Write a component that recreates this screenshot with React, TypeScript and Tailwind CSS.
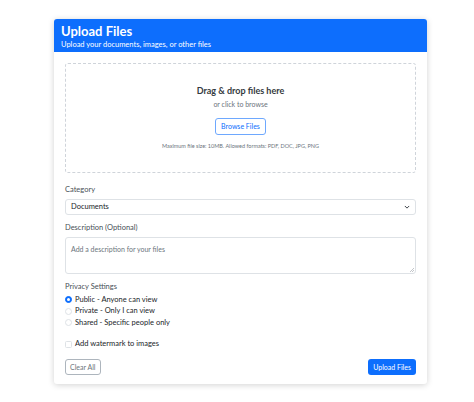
import { useState } from 'react';

const privacyOptions = [
  { id: 'public', label: 'Public - Anyone can view' },
  { id: 'private', label: 'Private - Only I can view' },
  { id: 'shared', label: 'Shared - Specific people only' },
];

export default function App() {
  const [privacy, setPrivacy] = useState('public');

  return (
    <div className="w-[474px] h-[402px] bg-white font-['Lato',sans-serif] text-[#212529]">
      <div className="absolute left-[54px] top-[19px] w-[373px] rounded-[3px] bg-white shadow-[0_1px_6px_rgba(0,0,0,0.18)]">
        {/* header */}
        <div className="h-[33px] rounded-t-[3px] bg-[#0d6efd] px-[7px] pt-[4px] text-white">
          <h1 className="text-[13px] font-bold leading-[17px]">Upload Files</h1>
          <p className="text-[7.5px] leading-[10px]">Upload your documents, images, or other files</p>
        </div>

        {/* body */}
        <div className="px-[11px] pt-[11px] pb-[9px]">
          <div className="flex h-[110px] flex-col items-center rounded-[3px] border border-dashed border-[#cfd4da] pt-[20px]">
            <p className="text-[9px] font-bold leading-[13px] text-[#343a40]">Drag &amp; drop files here</p>
            <p className="mt-[2px] text-[7px] leading-[10px] text-[#6c757d]">or click to browse</p>
            <button className="mt-[9px] h-[17px] rounded-[3px] border border-[#6ea8fe] px-[5px] text-[7px] leading-[15px] text-[#0d6efd]">
              Browse Files
            </button>
            <p className="mt-[7px] text-[5.5px] leading-[8px] text-[#6c757d]">
              Maximum file size: 10MB. Allowed formats: PDF, DOC, JPG, PNG
            </p>
          </div>

          <label className="mt-[12px] block text-[7.5px] leading-[10px] text-[#495057]">Category</label>
          <div className="mt-[4px] flex h-[16px] items-center justify-between rounded-[3px] border border-[#dee2e6] px-[5px]">
            <span className="text-[7.5px] leading-[10px] text-[#212529]">Documents</span>
            <svg width="6" height="6" viewBox="0 0 16 16" fill="none" stroke="#343a40" strokeWidth="2.5" strokeLinecap="round" strokeLinejoin="round">
              <path d="M3 6l5 5 5-5" />
            </svg>
          </div>

          <label className="mt-[8px] block text-[7.5px] leading-[10px] text-[#495057]">Description (Optional)</label>
          <div className="relative mt-[4px] h-[37px] rounded-[3px] border border-[#dee2e6] px-[5px] pt-[3px] leading-[10px]">
            <span className="text-[7px] leading-[10px] text-[#6c757d]">Add a description for your files</span>
            <svg className="absolute bottom-[1px] right-[1px]" width="5" height="5" viewBox="0 0 5 5" stroke="#9aa0a6" strokeWidth="0.6">
              <path d="M5 1L1 5M5 3L3 5" />
            </svg>
          </div>

          <p className="mt-[8px] text-[7.5px] leading-[10px] text-[#495057]">Privacy Settings</p>
          <div className="mt-[2px] flex flex-col">
            {privacyOptions.map((o) => (
              <button
                key={o.id}
                onClick={() => setPrivacy(o.id)}
                className="flex h-[11.5px] items-center gap-[3px] text-left"
              >
                <span
                  className={`flex h-[7px] w-[7px] items-center justify-center rounded-full border ${
                    privacy === o.id ? 'border-[#0d6efd] bg-[#0d6efd]' : 'border-[#dee2e6] bg-white'
                  }`}
                >
                  {privacy === o.id && <span className="h-[3px] w-[3px] rounded-full bg-white" />}
                </span>
                <span className="text-[7.5px] leading-[10px] text-[#212529]">{o.label}</span>
              </button>
            ))}
          </div>

          <div className="mt-[10px] flex h-[11px] items-center gap-[3px]">
            <span className="h-[7px] w-[7px] rounded-[1.5px] border border-[#dee2e6]" />
            <span className="text-[7.5px] leading-[10px] text-[#212529]">Add watermark to images</span>
          </div>

          <div className="mt-[9px] flex items-center justify-between">
            <button className="h-[16px] rounded-[3px] border border-[#adb5bd] px-[4px] text-[7px] leading-[14px] text-[#6c757d]">
              Clear All
            </button>
            <button className="h-[16px] rounded-[3px] bg-[#0d6efd] px-[5px] text-[7px] leading-[16px] text-white">
              Upload Files
            </button>
          </div>
        </div>
      </div>
    </div>
  );
}
